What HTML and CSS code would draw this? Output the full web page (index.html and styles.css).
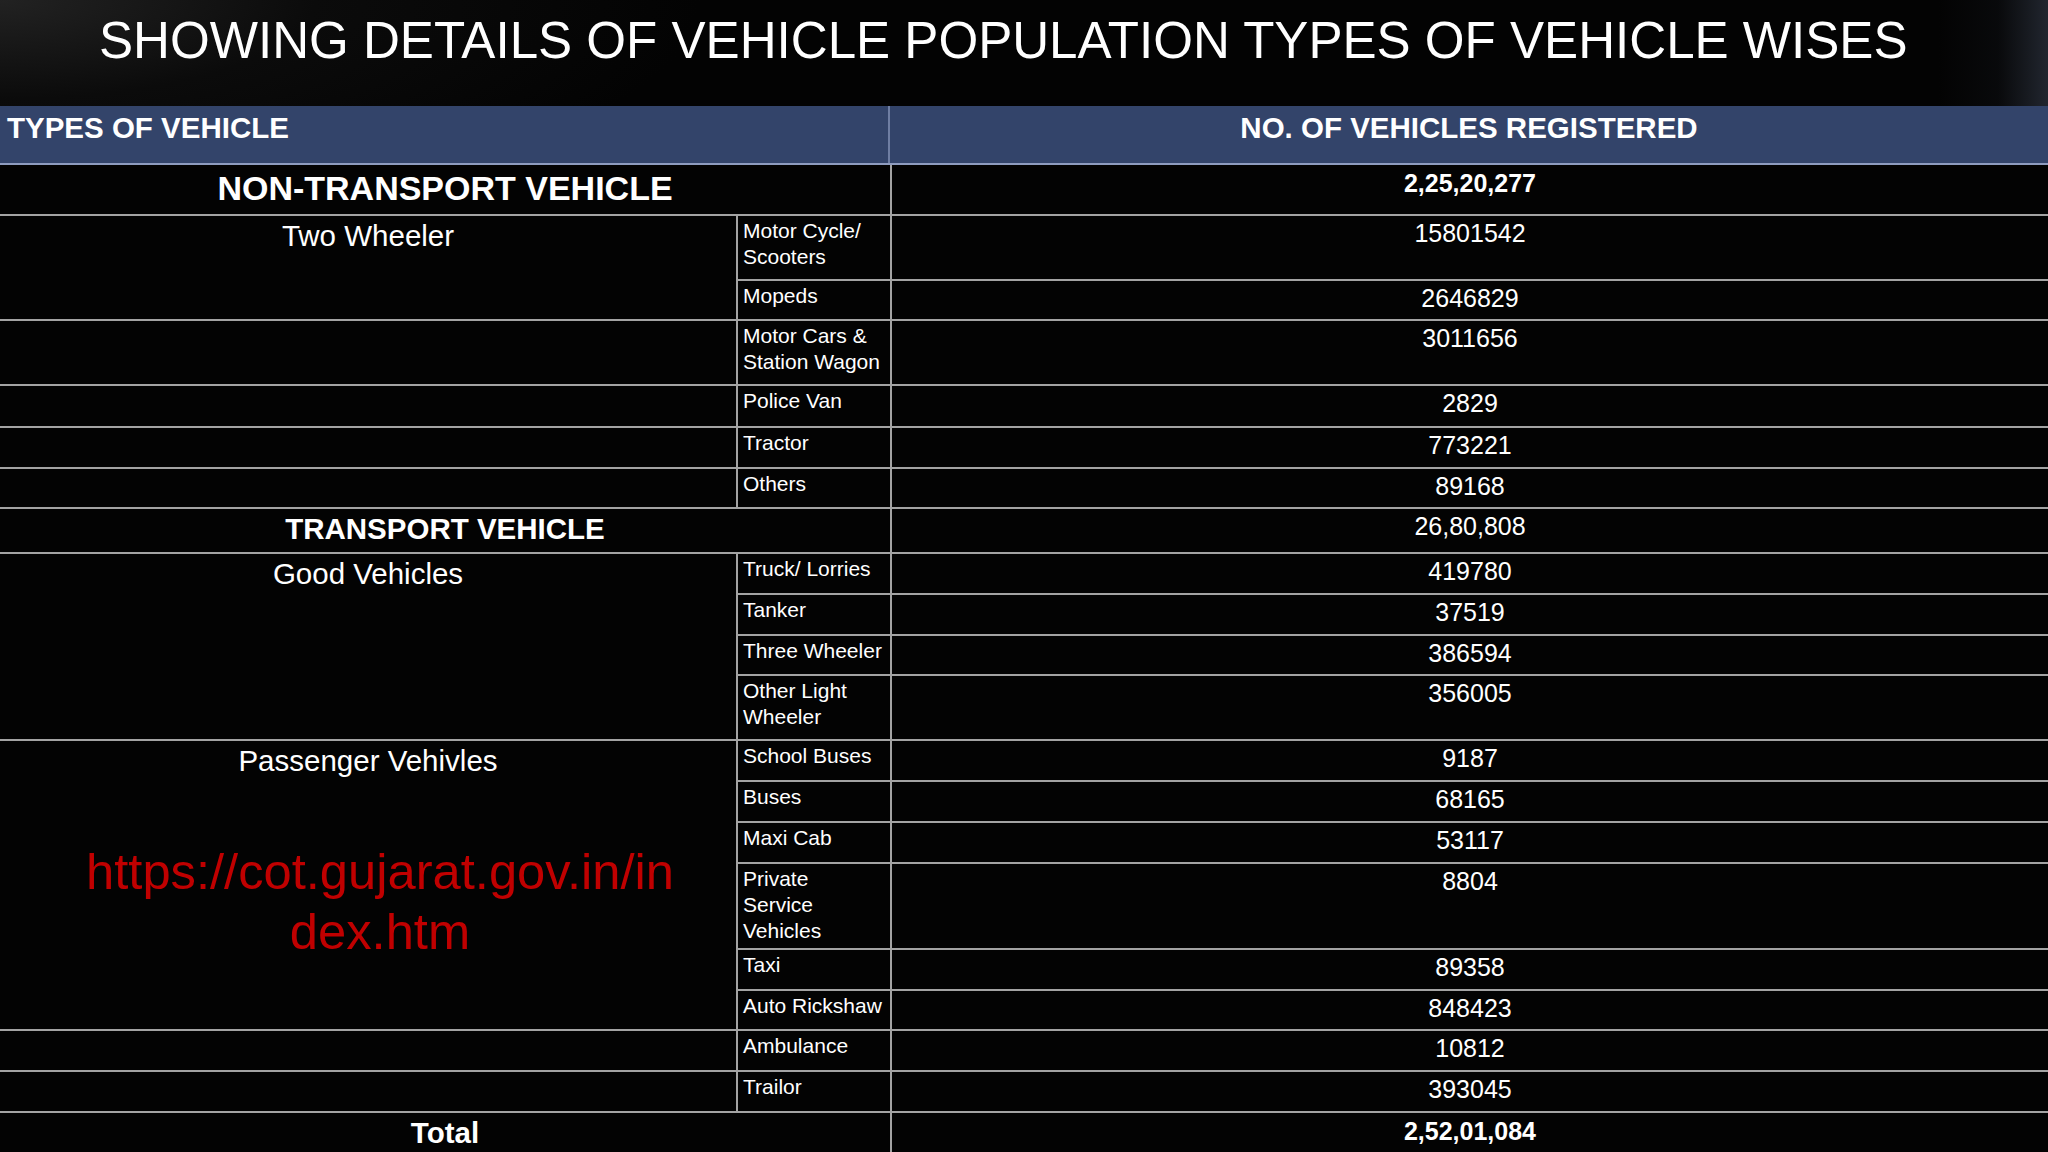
FILE: index.html
```html
<!DOCTYPE html>
<html lang="en">
<head>
<meta charset="utf-8">
<title>Vehicle Population</title>
<link rel="stylesheet" href="styles.css">
</head>
<body>
<div class="slide">
  <div class="title">SHOWING DETAILS OF VEHICLE POPULATION TYPES OF VEHICLE WISES</div>
  <div class="thead">
    <div class="th th-left">TYPES OF VEHICLE</div>
    <div class="th th-right">NO. OF VEHICLES REGISTERED</div>
  </div>
  <div class="grid">
    <div class="cell section big">NON-TRANSPORT VEHICLE</div>
    <div class="cell num bold">2,25,20,277</div>

    <div class="cell group span2">Two Wheeler</div>
    <div class="cell sub">Motor Cycle/<br>Scooters</div>
    <div class="cell num">15801542</div>
    <div class="cell sub">Mopeds</div>
    <div class="cell num">2646829</div>

    <div class="cell"></div>
    <div class="cell sub">Motor Cars &amp;<br>Station Wagon</div>
    <div class="cell num">3011656</div>

    <div class="cell"></div>
    <div class="cell sub">Police Van</div>
    <div class="cell num">2829</div>

    <div class="cell"></div>
    <div class="cell sub">Tractor</div>
    <div class="cell num">773221</div>

    <div class="cell"></div>
    <div class="cell sub">Others</div>
    <div class="cell num">89168</div>

    <div class="cell section">TRANSPORT VEHICLE</div>
    <div class="cell num num-t">26,80,808</div>

    <div class="cell group span4">Good Vehicles</div>
    <div class="cell sub">Truck/ Lorries</div>
    <div class="cell num">419780</div>
    <div class="cell sub">Tanker</div>
    <div class="cell num">37519</div>
    <div class="cell sub">Three Wheeler</div>
    <div class="cell num">386594</div>
    <div class="cell sub">Other Light<br>Wheeler</div>
    <div class="cell num">356005</div>

    <div class="cell group span6">Passenger Vehivles</div>
    <div class="cell sub">School Buses</div>
    <div class="cell num">9187</div>
    <div class="cell sub">Buses</div>
    <div class="cell num">68165</div>
    <div class="cell sub">Maxi Cab</div>
    <div class="cell num">53117</div>
    <div class="cell sub">Private<br>Service<br>Vehicles</div>
    <div class="cell num">8804</div>
    <div class="cell sub">Taxi</div>
    <div class="cell num">89358</div>
    <div class="cell sub">Auto Rickshaw</div>
    <div class="cell num">848423</div>

    <div class="cell"></div>
    <div class="cell sub">Ambulance</div>
    <div class="cell num">10812</div>

    <div class="cell"></div>
    <div class="cell sub">Trailor</div>
    <div class="cell num">393045</div>

    <div class="cell section total">Total</div>
    <div class="cell num bold">2,52,01,084</div>
  </div>
  <div class="url">https://cot.gujarat.gov.in/index.htm</div>
</div>
</body>
</html>
```

FILE: styles.css
```css
html, body {
  margin: 0;
  padding: 0;
  background: #030303;
  overflow: hidden;
}

body {
  font-family: "Liberation Sans", Arial, sans-serif;
  color: #ffffff;
}

.slide {
  position: relative;
  width: 2048px;
  height: 1152px;
  overflow: hidden;
  background:
    linear-gradient(to left, rgba(70, 80, 100, 0.45) 0, rgba(40, 46, 58, 0.15) 50px, rgba(0, 0, 0, 0) 110px),
    radial-gradient(ellipse 700px 220px at 0 0, #222222 0%, #0b0b0b 45%, #030303 100%);
}

.title {
  box-sizing: border-box;
  height: 106px;
  padding: 12px 0 0 99px;
  font-size: 51.1px;
  line-height: 58px;
  white-space: nowrap;
  color: #ffffff;
}

.thead {
  display: flex;
  height: 57px;
  background: #33446a;
  border-bottom: 2px solid #8e9cbf;
}

.th {
  box-sizing: border-box;
  font-weight: bold;
  font-size: 29.5px;
  line-height: 35px;
  padding-top: 4px;
  white-space: nowrap;
}

.th-left {
  width: 890px;
  padding-left: 7px;
  border-right: 2px solid #6f7ea3;
}

.th-right {
  flex: 1;
  text-align: center;
}

.grid {
  display: grid;
  grid-template-columns: 736px 152px 1fr;
  grid-template-rows: 49px 63px 38px 63px 40px 39px 38px 43px 39px 39px 38px 63px 39px 39px 39px 84px 39px 38px 39px 39px 39px;
  gap: 2px;
  background: #a3a3a3;
}

.cell {
  background: #030303;
  box-sizing: border-box;
  padding-top: 2px;
  overflow: hidden;
}

.section {
  grid-column: span 2;
  text-align: center;
  font-weight: bold;
  font-size: 29.5px;
  line-height: 35px;
}

.section.big {
  font-size: 34px;
  line-height: 40px;
  padding-top: 3px;
}

.group {
  text-align: center;
  font-size: 29.5px;
  line-height: 36px;
}

.span2 { grid-row: span 2; }
.span4 { grid-row: span 4; }
.span6 { grid-row: span 6; }

.sub {
  font-size: 21px;
  line-height: 26px;
  padding-left: 5px;
  white-space: nowrap;
}

.num {
  text-align: center;
  font-size: 25px;
  line-height: 30px;
}

.num.bold {
  font-weight: bold;
  padding-top: 3px;
}

.num-t {
  padding-top: 2px;
}

.url {
  position: absolute;
  left: 78px;
  top: 842px;
  width: 604px;
  text-align: center;
  word-break: break-all;
  font-size: 50.7px;
  line-height: 60px;
  color: #c00000;
}
```
